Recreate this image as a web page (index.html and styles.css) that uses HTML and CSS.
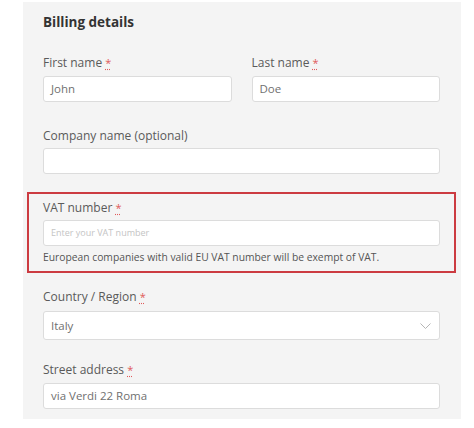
FILE: index.html
```html
<!DOCTYPE html>
<html lang="en">
<head>
<meta charset="utf-8">
<title>Billing details</title>
<link rel="stylesheet" href="styles.css">
</head>
<body>
<div class="panel">
  <h3 class="title">Billing details</h3>
  <div class="row">
    <div class="field">
      <label class="label">First name <abbr class="req">*</abbr></label>
      <div class="input">John</div>
    </div>
    <div class="field">
      <label class="label">Last name <abbr class="req">*</abbr></label>
      <div class="input">Doe</div>
    </div>
  </div>
  <div class="field field-company">
    <label class="label">Company name (optional)</label>
    <div class="input"></div>
  </div>
  <div class="field field-vat">
    <label class="label">VAT number <abbr class="req">*</abbr></label>
    <div class="input placeholder">Enter your VAT number</div>
    <p class="hint">European companies with valid EU VAT number will be exempt of VAT.</p>
  </div>
  <div class="field field-country">
    <label class="label">Country / Region <abbr class="req">*</abbr></label>
    <div class="input select">
      <span>Italy</span>
      <svg class="chev" width="11" height="6" viewBox="0 0 11 6"><path d="M0.5 0.5l5 5 5-5" fill="none" stroke="#b5b5b5" stroke-width="1"/></svg>
    </div>
  </div>
  <div class="field field-street">
    <label class="label">Street address <abbr class="req">*</abbr></label>
    <div class="input">via Verdi 22 Roma</div>
  </div>
</div>
</body>
</html>
```

FILE: styles.css
```css
html, body {
  margin: 0;
  padding: 0;
  background: #ffffff;
}
body {
  font-family: "Open Sans", "Noto Sans", sans-serif;
  color: #5a5a5a;
}
.panel {
  margin: 2px 0 0 23px;
  width: 438px;
  box-sizing: border-box;
  padding: 11px 21px 10px 20px;
  background: #f4f4f4;
}
.title {
  margin: 0 0 24px;
  font-size: 13.5px;
  line-height: 18px;
  font-weight: 700;
  color: #333;
}
.row {
  display: grid;
  grid-template-columns: 1fr 1fr;
  column-gap: 20px;
  margin-bottom: 26px;
}
.label {
  display: block;
  font-size: 12px;
  line-height: 16px;
  color: #5a5a5a;
  margin-bottom: 5px;
}
.req {
  color: #e05a5a;
  font-size: 11px;
  text-decoration: underline dotted;
  text-underline-offset: 2px;
}
.input {
  box-sizing: border-box;
  height: 26px;
  background: #fff;
  border: 1px solid #dcdcdc;
  border-radius: 3px;
  padding: 0 7px;
  font-size: 11.5px;
  line-height: 24px;
  color: #707070;
}
.placeholder {
  color: #c4c4c4;
  font-size: 9px;
}
.field-company {
  margin-bottom: 18px;
}
.field-company .label {
  margin-bottom: 4px;
}
.field-vat {
  margin: 0 -16px 16px;
  padding: 6px 14px 7px;
  border: 2px solid #cc3b41;
}
.field-vat .label {
  margin-bottom: 4px;
}
.hint {
  margin: 4px 0 0;
  font-size: 10.3px;
  line-height: 14px;
  color: #555;
}
.field-country {
  margin-bottom: 22px;
}
.field-country .label {
  margin-bottom: 6px;
}
.select {
  height: 29px;
  line-height: 27px;
  display: flex;
  align-items: center;
  justify-content: space-between;
}
.chev {
  margin-right: 1px;
}
```
